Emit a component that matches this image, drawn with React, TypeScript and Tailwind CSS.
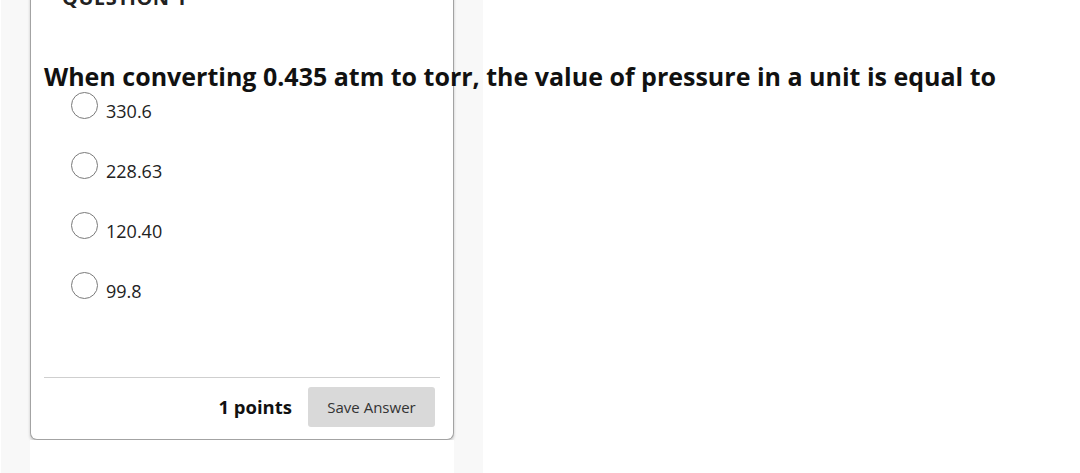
const options = ["330.6", "228.63", "120.40", "99.8"]

function Radio({ label }: { label: string }) {
  return (
    <label className="flex h-[60px] items-start gap-[8px] pl-[27px]">
      <span className="mt-[-2px] block h-[27px] w-[27px] rounded-full border border-[#7a7a7a] bg-white" />
      <span className="mt-[5px] text-[18px] leading-[24px] text-[#222]">{label}</span>
    </label>
  )
}

export default function App() {
  return (
    <div
      className="flex h-[473px] w-[1080px] overflow-hidden bg-white"
      style={{ fontFamily: '"Open Sans", "Noto Sans", sans-serif' }}
    >
      <div className="ml-[1px] flex w-[482px] flex-col bg-[#f8f8f8] px-[29px]">
        <div className="-mt-[14px] rounded-b-[7px] border border-t-0 border-[#a3a3a3] bg-white px-[13px] pb-[12px] shadow-[0_2px_3px_rgba(0,0,0,0.2)]">
          <h2 className="pl-[18px] text-[20px] font-bold leading-[24px] tracking-[0.5px] text-[#222]">
            QUESTION 1
          </h2>
          <p className="mt-[49px] whitespace-nowrap text-[25px] font-bold leading-[34px] text-[#111]">
            When converting 0.435 atm to torr, the value of pressure in a unit is equal to
          </p>
          <div className="mt-[1px] flex flex-col">
            {options.map((o) => (
              <Radio key={o} label={o} />
            ))}
          </div>
          <div className="mt-[43px] border-t border-[#cfcfcf]" />
          <div className="mt-[9px] flex items-center justify-end gap-[16px] pr-[5px]">
            <span className="text-[18.5px] font-bold text-[#111]">1 points</span>
            <button className="h-[40px] w-[127px] rounded-[3px] bg-[#d9d9d9] text-[15px] text-[#333]">
              Save Answer
            </button>
          </div>
        </div>
        <div className="flex-1 bg-white" />
      </div>
    </div>
  )
}
